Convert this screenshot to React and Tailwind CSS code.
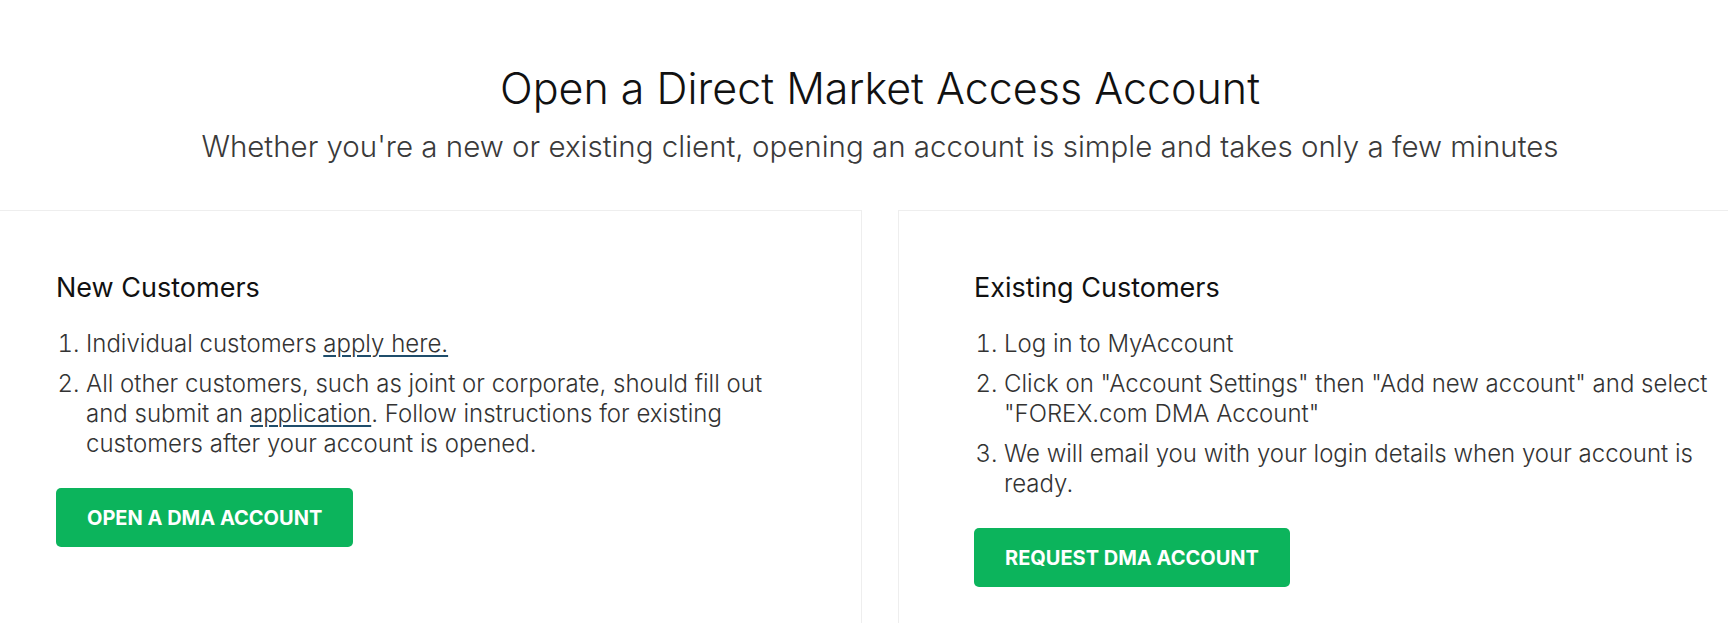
export default function App() {
  const newSteps = [
    <>
      Individual customers{' '}
      <a href="#" className="underline decoration-[#1f4d6b] decoration-2 underline-offset-[3px]">
        apply here.
      </a>
    </>,
    <>
      All other customers, such as joint or corporate, should fill out and submit an{' '}
      <a href="#" className="underline decoration-[#1f4d6b] decoration-2 underline-offset-[3px]">
        application
      </a>
      . Follow instructions for existing customers after your account is opened.
    </>
  ];

  const existingSteps = [
    'Log in to MyAccount',
    'Click on "Account Settings" then "Add new account" and select "FOREX.com DMA Account"',
    'We will email you with your login details when your account is ready.'
  ];

  return (
    <div className="h-[623px] w-full overflow-hidden bg-white font-['Inter',sans-serif]">
      <div className="ml-[-20px] w-[1800px]">
        {/* Header */}
        <div className="pt-[60px] text-center">
          <h1 className="text-[43px] leading-[56px] font-light text-[#111]">
            Open a Direct Market Access Account
          </h1>
          <p className="mt-[12px] text-[29.5px] leading-[36px] font-light text-[#3a3a3a]">
            Whether you're a new or existing client, opening an account is simple and takes only a few minutes
          </p>
        </div>

        {/* Cards */}
        <div className="mt-[46px] grid grid-cols-2 gap-[36px]">
          <div className="border border-[#eeeeee] pt-[59px] pl-[75px] pr-[79px] pb-[120px]">
            <h2 className="text-[27px] leading-[36px] font-normal text-[#111]">New Customers</h2>
            <ol className="mt-[23px] list-decimal pl-[30px] text-[24px] leading-[30px] font-light text-[#333]">
              {newSteps.map((s, i) => (
                <li key={i} className="mt-[10px] first:mt-0">
                  {s}
                </li>
              ))}
            </ol>
            <button className="mt-[29px] h-[59px] rounded-[5px] bg-[#0cb45c] px-[31px] text-[20px] font-bold uppercase text-white">
              Open a DMA Account
            </button>
          </div>

          <div className="border border-[#eeeeee] pt-[59px] pl-[75px] pr-[50px] pb-[120px]">
            <h2 className="text-[27px] leading-[36px] font-normal text-[#111]">Existing Customers</h2>
            <ol className="mt-[23px] list-decimal pl-[30px] text-[24px] leading-[30px] font-light text-[#333]">
              {existingSteps.map((s, i) => (
                <li key={i} className="mt-[10px] first:mt-0">
                  {s}
                </li>
              ))}
            </ol>
            <button className="mt-[29px] h-[59px] rounded-[5px] bg-[#0cb45c] px-[31px] text-[20px] font-bold uppercase text-white">
              Request DMA Account
            </button>
          </div>
        </div>
      </div>
    </div>
  );
}
